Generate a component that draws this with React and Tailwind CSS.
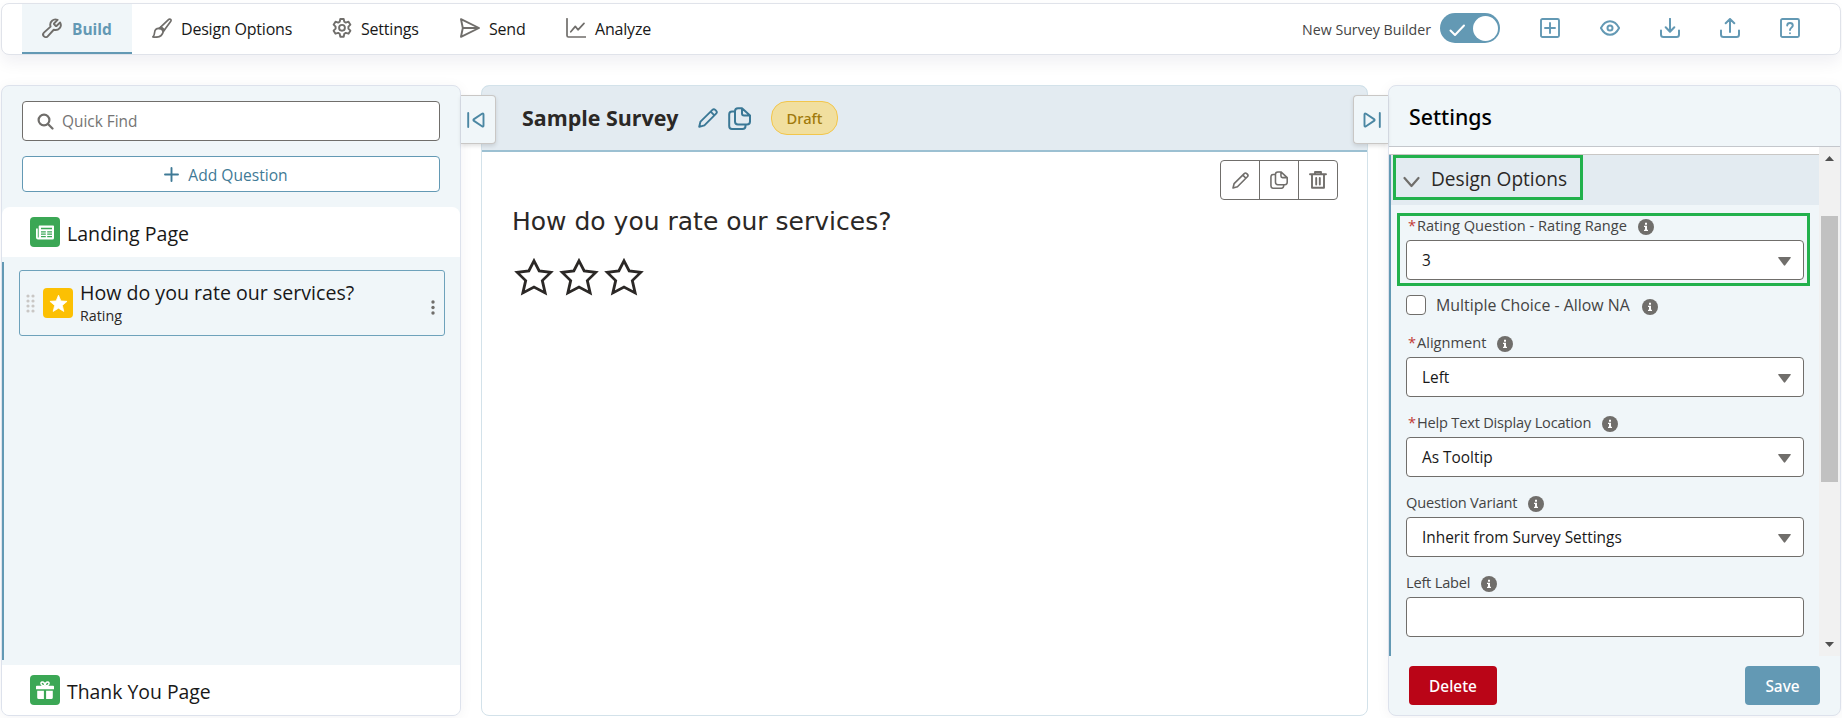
import React, { useState } from 'react';

const Icon = ({ children, className = '', size = 20, view = 20, width = 1.6 }) => (
    <svg
        width={size}
        height={size}
        viewBox={`0 0 ${view} ${view}`}
        fill="none"
        stroke="currentColor"
        strokeWidth={width}
        strokeLinecap="round"
        strokeLinejoin="round"
        className={`shrink-0 ${className}`}
    >
        {children}
    </svg>
);

const WrenchIcon = () => (
    <Icon view={24} width={2.3}>
        <path d="M14.7 6.3a1 1 0 0 0 0 1.4l1.6 1.6a1 1 0 0 0 1.400 0l4-4c1.100 2 1.400 4.700-.5 6.900-1.900 2.200-4.900 2.500-7.100 1.900l-7.300 7.900a2.900 2.900 0 0 1-4.500-4.400l8-7.300c-.7-2.200-.5-5.200 1.800-7.100 2.200-1.900 4.900-1.700 6.600-.9z" />
    </Icon>
);

const BrushIcon = () => (
    <Icon width={1.7}>
        <path d="M7.300 10.400 L16.200 1.800 C17.600 .4 19.800 1.400 18.800 3.200 L11.300 13.400" />
        <path d="M7.300 10.400 L9.500 11.100 L11.300 13.400 M9 8.800 L12.500 11.800" />
        <path d="M7.300 10.400 C4.500 10.300 2.800 11.800 2.600 14.500 C2.500 16.600 1.900 17.900 .9 18.900 C4.500 19.500 10.200 19.300 11.300 13.400" />
    </Icon>
);

const GearIcon = () => (
    <Icon width={1.9}>
        <path d="M8.300 1h3.400l.6 2.700 1.500.9 2.700-.9 1.900 3-2 2v2l2 2-1.900 3-2.700-.8-1.500.9-.6 2.900H8.300l-.6-2.900-1.500-.9-2.700.8-1.900-3 2-2v-2l-2-2 1.900-3 2.700.9 1.500-.9z" />
        <circle cx="10" cy="9.800" r="2.900" />
    </Icon>
);

const SendIcon = () => (
    <Icon width={1.9}>
        <path d="M1 1.200 L19 10 L1 18.800 L2.800 10 Z M2.800 10 H18" />
    </Icon>
);

const ChartIcon = () => (
    <Icon width={1.7}>
        <path d="M1 .8V17.500Q1 19 2.500 19H19.500M4.800 13.800L9.300 8.400L12 11.800L18 5.300" />
    </Icon>
);

const PencilIcon = ({ size, className }) => (
    <Icon size={size} className={className} width={1.9}>
        <path d="M1.200 18.800L2.500 13.600L14.400 1.900Q15.800.5 17.300 1.900L18.200 2.800Q19.500 4.200 18.100 5.600L6.400 17.300Z M12.700 3.600L16.400 7.300" />
    </Icon>
);

const CopyIcon = ({ size, className }) => (
    <Icon size={size} className={className} view={23} width={2}>
        <path d="M14 1.200H10Q7 1.200 7 4.200V14.500Q7 17.500 10 17.500H19Q22 17.500 22 14.500V8.500Z M14 1.200V6.500Q14 8.500 16 8.500H22" />
        <path d="M6.500 4.500H4Q1.200 4.500 1.200 7.500V19Q1.200 22 4 22H14.500Q17.500 22 17.500 19V18" />
    </Icon>
);

const TrashIcon = () => (
    <Icon size={18} view={18} width={1.900}>
        <path d="M1 3.200H17M6 2.800V1H12V2.800M3 3.500V16.800H15V3.500M7.200 7V13.500M10.800 7V13.500" />
    </Icon>
);

const InfoIcon = ({ className = '' }) => (
    <svg width="16" height="16" viewBox="0 0 16 16" className={`shrink-0 text-[#706e6b] ${className}`}>
        <circle cx="8" cy="8" r="8" fill="currentColor" />
        <path d="M7 3.700h2v2H7zM6 6.800h3v4h1v1.200H6v-1.200h1V8H6z" fill="#fff" />
    </svg>
);

const navItems = [
    { label: 'Design Options', icon: BrushIcon, width: 'w-[180px]' },
    { label: 'Settings', icon: GearIcon, width: 'w-[128px]' },
    { label: 'Send', icon: SendIcon, width: 'w-[106px]' },
    { label: 'Analyze', icon: ChartIcon, width: 'w-[126px]' },
];

function Header() {
    const [enabled, setEnabled] = useState(true);

    return (
        <header className="flex h-[52px] shrink-0 rounded-lg border border-[#e0e3ea] bg-white pr-10 pl-5 shadow-[0_8px_16px_rgba(20,20,60,0.06)]">
            <nav className="flex text-[#706e6b]">
                <button className="flex w-[110px] items-center border-b-2 border-[#6399b4] bg-[#f0f6f9] pl-5">
                    <WrenchIcon />
                    <span className="ml-2.5 pt-1 text-[15.5px] font-bold text-[#6399b4]">Build</span>
                </button>
                {navItems.map(({ label, icon: NavIcon, width }) => (
                    <button key={label} className={`flex items-center pb-0.5 pl-5 ${width}`}>
                        <NavIcon />
                        <span className="ml-[9px] pt-0.5 text-base tracking-[-0.2px] whitespace-nowrap text-[#181818]">{label}</span>
                    </button>
                ))}
            </nav>

            <div className="ml-auto flex items-center gap-10 pb-0.5 text-[#6399b4]">
                <div className="flex items-center">
                    <span className="pt-1 text-[14.2px] text-[#444]">New Survey Builder</span>
                    <button
                        onClick={() => setEnabled(!enabled)}
                        className="ml-[9px] flex h-[30px] w-[60px] items-center justify-between rounded-full bg-[#6399b4] pr-[2px] pl-[9px]"
                    >
                        <Icon size={17} view={17} width={2} className="mt-1 text-white">
                            <path d="M1.500 8.500L6 13L15 3.500" />
                        </Icon>
                        <span className="size-[25px] rounded-full bg-white" />
                    </button>
                </div>
                <Icon width={1.9}>
                    <rect x="1" y="1" width="18" height="18" rx="1.500" />
                    <path d="M10 5V15M5 10H15" />
                </Icon>
                <Icon width={2}>
                    <path d="M.9 10C3.300 5.400 6.500 3.200 10 3.200S16.700 5.400 19.100 10C16.700 14.600 13.500 16.800 10 16.800S3.300 14.600.9 10Z" />
                    <circle cx="10" cy="10" r="2.500" />
                </Icon>
                <Icon width={2}>
                    <path d="M10 .8V13M5.700 9.300L10 13.700L14.300 9.300M1 12.500V16.500Q1 19 3.500 19H16.500Q19 19 19 16.500V12.500" />
                </Icon>
                <Icon width={2}>
                    <path d="M10 14V1.200M5.700 5.300L10 1L14.300 5.300M1 12.500V16.500Q1 19 3.500 19H16.500Q19 19 19 16.500V12.500" />
                </Icon>
                <Icon width={1.9}>
                    <rect x="1" y="1" width="18" height="18" rx="1.500" />
                    <path d="M7.200 7.500C7.200 4.200 12.800 4.200 12.800 7.500C12.800 9.500 10 9.800 10 12M10 15.200V15.300" />
                </Icon>
            </div>
        </header>
    );
}

function PageRow({ title, children, className = '' }) {
    return (
        <div className={`flex h-[50px] shrink-0 items-center bg-white pl-7 ${className}`}>
            <div className="flex size-[30px] items-center justify-center rounded bg-[#3ba755]">{children}</div>
            <span className="ml-[7px] pt-1 text-[#181818]">{title}</span>
        </div>
    );
}

function QuestionList() {
    return (
        <aside className="relative flex w-[460px] shrink-0 flex-col overflow-hidden rounded-lg border border-[#dde2ec] bg-[#f0f6f9] shadow-[0_2px_14px_rgba(20,20,60,0.05)]">
            <div className="flex flex-col gap-[15px] px-5 py-[15px]">
                <div className="flex h-10 items-center rounded border border-[#706e6b] bg-white pl-3.5">
                    <Icon size={17} view={17} width={2.2} className="text-[#706e6b]">
                        <circle cx="7" cy="7" r="5.400" />
                        <path d="M11 11L15.500 15.500" />
                    </Icon>
                    <span className="ml-2 pt-0.5 text-[15.4px] text-[#747474]">Quick Find</span>
                </div>
                <button className="flex h-9 items-center justify-center rounded border border-[#6399b4] bg-white pr-2.5 text-[#3f7a96]">
                    <Icon size={15} view={15} width={1.900}>
                        <path d="M7.500 1V14M1 7.500H14" />
                    </Icon>
                    <span className="ml-[9px] pt-[3px] text-[15.6px]">Add Question</span>
                </button>
            </div>

            <PageRow title="Landing Page" className="rounded-t-lg text-[19.6px]">
                <svg width="18" height="15" viewBox="0 0 18 15" fill="none">
                    <path d="M0 3.500H1.800V12.500H2.700V1.300Q2.700.5 3.500.5H17.200Q18 .5 18 1.300V13Q18 14.500 16.500 14.500H2Q0 14.500 0 12.500Z" fill="#fff" />
                    <path d="M5 3.500H16M5 6.800H9.800M11.200 6.800H16M5 9.200H9.800M11.200 9.200H16M5 11.700H9.800M11.200 11.700H16" stroke="#3ba755" strokeWidth="1.300" />
                </svg>
            </PageRow>

            <div className="my-[5px] flex-1 border-l-2 border-[#6399b4] px-[15px] pt-2">
                <div className="flex h-[66px] items-center rounded-[3px] border border-[#6ea2bb] pl-1.5">
                    <svg width="9" height="19" viewBox="0 0 9 19" fill="#c9c7c5">
                        {[2, 7, 12, 17].map((y) => (
                            <g key={y}>
                                <circle cx="2" cy={y} r="1.600" />
                                <circle cx="7" cy={y} r="1.600" />
                            </g>
                        ))}
                    </svg>
                    <div className="ml-2 flex size-[30px] items-center justify-center rounded bg-[#fcc003]">
                        <svg width="19" height="19" viewBox="0 0 24 24" fill="#fff" stroke="#fff" strokeWidth="1" strokeLinejoin="round">
                            <path d="M12 1.500l3 7.300 7.800.5-6 5.100 1.900 7.600L12 17.900 5.300 22l1.900-7.600-6-5.100 7.800-.5z" />
                        </svg>
                    </div>
                    <div className="ml-[7px] flex flex-col pt-px">
                        <span className="text-[19.6px] leading-6 text-[#181818]">How do you rate our services?</span>
                        <span className="text-[14.3px] leading-[22px] text-[#2b2826]">Rating</span>
                    </div>
                    <svg width="4" height="15" viewBox="0 0 4 15" fill="#706e6b" className="mt-2 mr-[9px] ml-auto">
                        <circle cx="2" cy="2" r="1.700" />
                        <circle cx="2" cy="7.500" r="1.700" />
                        <circle cx="2" cy="13" r="1.700" />
                    </svg>
                </div>
            </div>

            <PageRow title="Thank You Page" className="text-[19.4px]">
                <svg width="18" height="18" viewBox="0 0 18 18" fill="#fff">
                    <path d="M1.200 9.800H7.900V18H2.700Q1.200 18 1.200 16.500ZM10.100 9.800H16.800V16.500Q16.800 18 15.300 18H10.100ZM.8 4.700H17.200Q18 4.700 18 5.500V8.200H0V5.500Q0 4.700.8 4.700Z" />
                    <path d="M8.800 4.800C4.500 5.200 4 1 6.300 1C8 1 8.800 2.800 9 4.500C9.200 2.800 10 1 11.700 1C14 1 13.500 5.200 9.200 4.800" fill="none" stroke="#fff" strokeWidth="1.500" />
                </svg>
            </PageRow>
        </aside>
    );
}

function SurveyCanvas() {
    return (
        <main className="flex w-[887px] shrink-0 flex-col overflow-hidden rounded-lg border border-[#d3e2ea] bg-white">
            <div className="-mx-px -mt-px flex h-[67px] shrink-0 items-center rounded-t-lg border border-b-2 border-[#9cc0d2] bg-[#e3ebf1] pl-10 text-[#3b7896]">
                <h1 className="w-[157px] text-[21.4px] font-bold whitespace-nowrap text-[#2b2826]">Sample Survey</h1>
                <PencilIcon className="ml-[19px]" />
                <CopyIcon size={23} className="ml-2.5" />
                <span className="ml-5 flex h-[34px] w-[67px] items-center justify-center rounded-2xl border border-[#f2c64c] bg-[#f1df9f] pt-px font-['Noto_Sans'] text-[14.7px] font-medium text-[#a07a0c]">
                    Draft
                </span>
            </div>
            <div className="mt-2 mr-[29px] flex h-10 w-[118px] divide-x divide-[#706e6b] self-end rounded border border-[#706e6b] text-[#706e6b]">
                <button className="flex flex-1 items-center justify-center"><PencilIcon size={17} /></button>
                <button className="flex flex-1 items-center justify-center"><CopyIcon size={18} /></button>
                <button className="flex flex-1 items-center justify-center"><TrashIcon /></button>
            </div>
            <div className="px-[30px] text-[#2b2826]">
                <p className="mt-[5px] font-['DejaVu_Sans'] text-[25px] leading-[34px]">How do you rate our services?</p>
                <div className="mt-[18px] ml-[2px] flex gap-[5px]">
                    {[1, 2, 3].map((n) => (
                        <svg key={n} width="40" height="39" viewBox="1.500 1.500 37 36" fill="none" stroke="currentColor" strokeWidth="2.600">
                            <path d="M20 5L24.800 14.300L35.500 15.700L27.700 23.300L30.300 34.700L20 29.300L9.700 34.700L12.300 23.300L4.500 15.700L15.200 14.300Z" />
                        </svg>
                    ))}
                </div>
            </div>
        </main>
    );
}

function Field({ label, value, required, select = true, labelClass = 'tracking-normal' }) {
    return (
        <div>
            <div className="flex h-[26px] items-center pb-[2px] text-[14.6px] text-[#444]">
                {required && <span className="w-[11px] pl-[2px] text-[#c23934]">*</span>}
                <span className={labelClass}>{label}</span>
                <InfoIcon className="mt-[2px] ml-[11px]" />
            </div>
            <div className="flex h-10 items-center justify-between rounded border border-[#706e6b] bg-white pr-3 pl-[15px] text-[15.4px] text-[#181818]">
                <span className="pt-px">{value}</span>
                {select && (
                    <svg width="13" height="9" viewBox="0 0 13 9" className="mt-0.5 text-[#706e6b]">
                        <path d="M.8 0H12.200Q13.300 0 12.600 1L7.200 8.300Q6.500 9 5.800 8.300L.4 1Q-.3 0 .8 0Z" fill="currentColor" />
                    </svg>
                )}
            </div>
        </div>
    );
}

function ScrollBar() {
    return (
        <div className="flex w-[21px] shrink-0 flex-col items-center bg-[#f1f1f1] text-[#505050]">
            <svg width="9" height="5" viewBox="0 0 9 5" className="mt-[9px] shrink-0"><path d="M0 5L4.500 0L9 5Z" fill="currentColor" /></svg>
            <div className="mt-[55px] h-[266px] w-[17px] shrink-0 bg-[#c1c1c1]" />
            <svg width="9" height="5" viewBox="0 0 9 5" className="mt-auto mb-[9px] shrink-0"><path d="M0 0L4.500 5L9 0Z" fill="currentColor" /></svg>
        </div>
    );
}

function SettingsPanel() {
    return (
        <aside className="flex w-[453px] shrink-0 flex-col overflow-hidden rounded-lg border border-[#dde2ec] bg-[#f0f6f9] shadow-[0_2px_14px_rgba(20,20,60,0.05)]">
            <h2 className="flex h-[61px] shrink-0 items-center border-b border-[#c4c7cc] pt-px pl-5 font-['Noto_Sans'] text-[21.3px] font-medium text-black">Settings</h2>
            <div className="flex h-[509px] shrink-0">
                <div className="flex flex-1 flex-col">
                    <div className="h-2 border-b border-[#c9c7c5] bg-white" />
                    <div className="relative flex-1 border-l-2 border-[#6399b4]">
                        <div className="flex h-[50px] items-center bg-[#e3ebf1] pl-3">
                            <Icon size={17} view={17} width={2.200} className="mt-1 text-[#706e6b]">
                                <path d="M1.500 4L8.500 12L15.500 4" />
                            </Icon>
                            <h3 className="ml-[11px] pb-[2px] text-[19.1px] text-[#2b2826]">Design Options</h3>
                        </div>
                        <div className="flex flex-col gap-3.5 px-[15px] pt-[9px]">
                            <Field label="Rating Question - Rating Range" value="3" required />
                            <div className="mt-px mb-0.5 flex h-5 items-center">
                                <span className="size-5 rounded-sm border border-[#706e6b] bg-white" />
                                <span className="ml-2.5 pt-px text-[15.9px] text-[#444]">Multiple Choice - Allow NA</span>
                                <InfoIcon className="mt-[3px] ml-3" />
                            </div>
                            <Field label="Alignment" value="Left" required />
                            <Field label="Help Text Display Location" value="As Tooltip" required labelClass="tracking-[-0.2px]" />
                            <Field label="Question Variant" value="Inherit from Survey Settings" labelClass="tracking-[-0.2px]" />
                            <Field label="Left Label" value="" select={false} labelClass="tracking-[-0.2px]" />
                        </div>
                        {/* Highlight frames */}
                        <div className="absolute top-0 left-[2px] h-[45px] w-[190px] border-[3px] border-[#22b14c]" />
                        <div className="absolute top-[58px] left-[6px] h-[73px] w-[413px] border-[3px] border-[#22b14c]" />
                    </div>
                </div>
                <ScrollBar />
            </div>
            <div className="flex flex-1 items-start justify-between pt-2.5 pr-5 pl-5 font-['Noto_Sans'] text-[15.4px] font-medium text-white">
                <button className="h-[39px] w-[88px] rounded bg-[#ba0517] pt-0.5">Delete</button>
                <button className="h-[39px] w-[75px] rounded bg-[#6399b4] pt-0.5">Save</button>
            </div>
        </aside>
    );
}

export default function App() {
    return (
        <div className="flex h-[718px] w-[1842px] flex-col overflow-hidden bg-white px-px pt-[3px] font-['Open_Sans',sans-serif]">
            <Header />
            <div className="relative mt-[30px] flex h-[631px] shrink-0 gap-5">
                <QuestionList />
                <SurveyCanvas />
                <SettingsPanel />

                <button className="absolute top-[10px] left-[460px] flex h-[49px] w-[35px] items-center rounded-r border border-l-0 border-[#c9c7c5] bg-[#f0f6f9] pl-1.5 text-[#4b87a3] shadow-[0_2px_4px_rgba(0,0,0,0.12)]">
                    <Icon size={18} view={18} width={1.900}>
                        <path d="M1.200 2V16M16.500 3.600V14.400Q16.500 16.200 15 15.200L7 9.900Q5.800 9 7 8.100L15 2.800Q16.500 1.800 16.500 3.600Z" />
                    </Icon>
                </button>
                <button className="absolute top-[10px] left-[1352px] flex h-[49px] w-[35px] items-center rounded-l border border-r-0 border-[#c9c7c5] bg-[#f0f6f9] pl-[9px] text-[#4b87a3] shadow-[0_2px_4px_rgba(0,0,0,0.12)]">
                    <Icon size={18} view={18} width={1.900}>
                        <path d="M16.800 2V16M1.500 3.600V14.400Q1.500 16.200 3 15.200L11 9.900Q12.200 9 11 8.100L3 2.800Q1.500 1.800 1.500 3.600Z" />
                    </Icon>
                </button>
            </div>
        </div>
    );
}
